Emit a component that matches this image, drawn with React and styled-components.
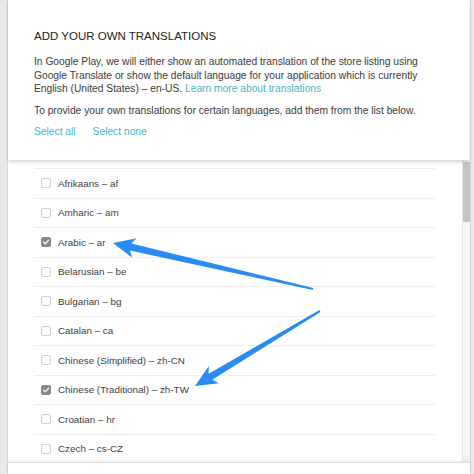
import React from 'react';
import styled, { createGlobalStyle } from 'styled-components';

const GlobalStyle = createGlobalStyle`
  html, body {
    margin: 0;
    padding: 0;
    background: #e9e9e9;
    overflow: hidden;
  }
  * { box-sizing: border-box; }
`;

// PAGE
const Page = styled.div`
  position: relative;
  width: 474px;
  height: 474px;
  display: flex;
  font-family: "Liberation Sans", Arial, sans-serif;
  background: #ebebeb;
  overflow: hidden;
`;
const Gutter = styled.div`
  width: ${p => p.w}px;
  flex-shrink: 0;
  background: #e8e8e8;
`;
const Dialog = styled.div`
  flex: 1;
  display: flex;
  flex-direction: column;
  background: #fff;
  border-left: 1px solid #d6d6d6;
  border-right: 1px solid #d6d6d6;
  min-width: 0;
`;

// HEADER
const Header = styled.div`
  position: relative;
  z-index: 1;
  height: 160px;
  background: #fff;
  padding: 29px 26px 0 26px;
  margin-right: 1px;
  box-shadow: 0 2px 3px rgba(0, 0, 0, 0.16);
`;
const Title = styled.h1`
  margin: 0 0 12px 0;
  font-size: 11.5px;
  font-weight: 400;
  color: #222;
  line-height: 14px;
`;
const Para = styled.p`
  margin: 0 0 8px 0;
  font-size: 10.25px;
  line-height: 13.6px;
  color: #3a3a3a;
`;
const Link = styled.a`
  color: #49b3cb;
  text-decoration: none;
`;
const Actions = styled.div`
  display: flex;
  gap: 17px;
  font-size: 10.25px;
  margin-top: 9px;
`;

// LIST
const ListArea = styled.div`
  flex: 1;
  display: flex;
  min-height: 0;
`;
const List = styled.div`
  flex: 1;
  padding: 8px 27px 0 26px;
  overflow: hidden;
`;
const Row = styled.div`
  height: 29.5px;
  display: flex;
  align-items: center;
  gap: 7px;
  padding-left: 7px;
  border-top: 1px solid #ededed;
  font-size: 9.85px;
  color: #404040;
`;
const Box = styled.span`
  width: 10px;
  height: 10px;
  border-radius: 2px;
  border: 1px solid ${p => (p.checked ? '#8a8a8a' : '#cfcfcf')};
  background: ${p => (p.checked ? '#8a8a8a' : '#fff')};
  display: flex;
  align-items: center;
  justify-content: center;
  flex-shrink: 0;
`;
const ScrollTrack = styled.div`
  width: 8px;
  background: #f4f4f4;
  border-left: 1px solid #e6e6e6;
  display: flex;
  flex-direction: column;
`;
const ScrollThumb = styled.div`
  height: 60px;
  background: #c4c4c4;
  margin-top: 2px;
`;
const Footer = styled.div`
  height: 12px;
  background: #fff;
  border-top: 1px solid #dedede;
  box-shadow: 0 -1px 2px rgba(0, 0, 0, 0.08);
  position: relative;
  z-index: 1;
`;

const Overlay = styled.svg`
  position: absolute;
  left: 0;
  top: 0;
  pointer-events: none;
`;

const languages = [
  ['Afrikaans – af', false],
  ['Amharic – am', false],
  ['Arabic – ar', true],
  ['Belarusian – be', false],
  ['Bulgarian – bg', false],
  ['Catalan – ca', false],
  ['Chinese (Simplified) – zh-CN', false],
  ['Chinese (Traditional) – zh-TW', true],
  ['Croatian – hr', false],
  ['Czech – cs-CZ', false],
];

const Check = () => (
  <svg width="8" height="8" viewBox="0 0 8 8">
    <path d="M1.5 4.2l1.7 1.7L6.6 2.2" fill="none" stroke="#fff" strokeWidth="1.2" strokeLinecap="round" strokeLinejoin="round" />
  </svg>
);

const App = () => (
  <>
    <GlobalStyle />
    <Page>
      <Gutter w={7} />
      <Dialog>
        <Header>
          <Title>ADD YOUR OWN TRANSLATIONS</Title>
          <Para>
            In Google Play, we will either show an automated translation of the store listing using
            Google Translate or show the default language for your application which is currently
            English (United States) – en-US. <Link>Learn more about translations</Link>
          </Para>
          <Para>To provide your own translations for certain languages, add them from the list below.</Para>
          <Actions>
            <Link>Select all</Link>
            <Link>Select none</Link>
          </Actions>
        </Header>
        <ListArea>
          <List>
            {languages.map(([name, checked]) => (
              <Row key={name}>
                <Box checked={checked}>{checked && <Check />}</Box>
                {name}
              </Row>
            ))}
          </List>
          <ScrollTrack>
            <ScrollThumb />
          </ScrollTrack>
        </ListArea>
        <Footer />
      </Dialog>
      <Gutter w={3} />
      <Overlay width="474" height="474" viewBox="0 0 474 474">
        <polygon
          fill="#2a8cf0"
          points="113,243 136.7,238.2 131.4,243.6 313.2,288 312.8,290 129.8,250.4 132.3,257.8"
        />
        <polygon
          fill="#2a8cf0"
          points="195,386 219,383.3 212.2,379.7 320.5,311.9 319.5,310.1 208.6,373.7 208.8,366.1"
        />
      </Overlay>
    </Page>
  </>
);

export default App;
